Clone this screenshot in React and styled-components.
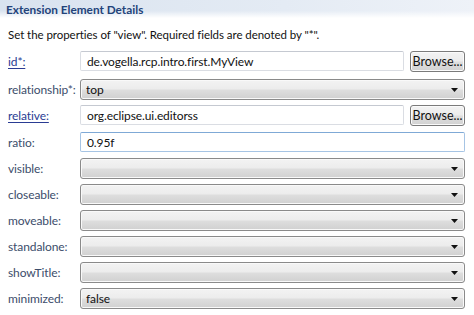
import React from "react";
import styled, { createGlobalStyle } from "styled-components";

const Global = createGlobalStyle`
  html, body { margin: 0; padding: 0; background: #fff; }
  body { font-family: Lato, "Open Sans", sans-serif; }
`;

const Page = styled.div`
  width: 474px;
  height: 315px;
  background: #fff;
  overflow: hidden;
`;

const Header = styled.div`
  height: 18px;
  display: flex;
  align-items: center;
  padding-left: 6px;
  background: linear-gradient(to bottom, rgba(255,255,255,0) 0%, rgba(255,255,255,0.0) 60%, #ffffff 100%),
    linear-gradient(to right, #d9e3ef 0%, #e4ebf4 60%, #eef2f8 100%);
  font-weight: 700;
  font-size: 11.8px;
  color: #23437a;
`;

const Description = styled.div`
  margin: 8px 0 0 8px;
  height: 17px;
  display: flex;
  align-items: center;
  font-size: 11.5px;
  letter-spacing: -0.05px;
  color: #111;
`;

const Form = styled.div`
  margin-top: 8px;
  display: grid;
  grid-template-columns: 72px 1fr;
  row-gap: 5px;
  padding: 0 9px 0 8px;
`;

const Label = styled.div`
  height: 21px;
  display: flex;
  align-items: center;
  font-size: 12px;
  letter-spacing: -0.1px;
  color: #3c4d6b;
  white-space: nowrap;
  ${(p) => p.$link && `
    color: #2a3c93;
    text-decoration: underline;
    text-underline-offset: 2px;
  `}
  ${(p) => p.$extra && `margin-top: ${p.$extra}px;`}
`;

const Cell = styled.div`
  display: flex;
  gap: 6px;
  height: 21px;
  ${(p) => p.$extra && `margin-top: ${p.$extra}px;`}
`;

const TextField = styled.div`
  flex: 1;
  box-sizing: border-box;
  height: 20px;
  border: 1px solid ${(p) => (p.$focus ? "#a6c4e4" : "#dadde3")};
  border-top-color: ${(p) => (p.$focus ? "#7fa9d6" : "#c5c9d1")};
  border-radius: 2px;
  background: #fff;
  display: flex;
  align-items: center;
  padding-left: 6px;
  font-size: 12px;
  letter-spacing: -0.1px;
  color: #111;
`;

const Button = styled.div`
  width: 55px;
  box-sizing: border-box;
  height: 21px;
  border: 1px solid #7b7b7b;
  border-radius: 3px;
  background: linear-gradient(to bottom, #f3f3f3 0%, #ececec 48%, #dedede 52%, #d2d2d2 100%);
  box-shadow: inset 0 0 0 1px #fbfbfb;
  display: flex;
  align-items: center;
  justify-content: center;
  font-size: 12.5px;
  color: #111;
`;

const Combo = styled.div`
  flex: 1;
  box-sizing: border-box;
  height: 21px;
  border: 1px solid #8a8a8a;
  border-radius: 3px;
  background: linear-gradient(to bottom, #f3f3f3 0%, #ececec 48%, #dedede 52%, #d0d0d0 100%);
  box-shadow: inset 0 0 0 1px #f9f9f9;
  display: flex;
  align-items: center;
  padding: 0 6px 0 5px;
  font-size: 12px;
  letter-spacing: -0.1px;
  color: #111;
`;

const ComboText = styled.span`
  flex: 1;
`;

const Arrow = () => (
  <svg width="7" height="4" viewBox="0 0 7 4">
    <path d="M0 0 H7 L3.5 4 Z" fill="#111" />
  </svg>
);

const rows = [
  { label: "id*:", link: true, kind: "text", value: "de.vogella.rcp.intro.first.MyView", browse: true },
  { label: "relationship*:", kind: "combo", value: "top", extra: 2 },
  { label: "relative:", link: true, kind: "text", value: "org.eclipse.ui.editorss", browse: true },
  { label: "ratio:", kind: "text", value: "0.95f", focus: true, extra: 1 },
  { label: "visible:", kind: "combo", value: "" },
  { label: "closeable:", kind: "combo", value: "" },
  { label: "moveable:", kind: "combo", value: "" },
  { label: "standalone:", kind: "combo", value: "" },
  { label: "showTitle:", kind: "combo", value: "" },
  { label: "minimized:", kind: "combo", value: "false" },
];

export default function App() {
  return (
    <Page>
      <Global />
      <Header>Extension Element Details</Header>
      <Description>Set the properties of "view". Required fields are denoted by "*".</Description>
      <Form>
        {rows.map((r) => (
          <React.Fragment key={r.label}>
            <Label $link={r.link} $extra={r.extra}>{r.label}</Label>
            <Cell $extra={r.extra}>
              {r.kind === "text" ? (
                <TextField $focus={r.focus}>{r.value}</TextField>
              ) : (
                <Combo>
                  <ComboText>{r.value}</ComboText>
                  <Arrow />
                </Combo>
              )}
              {r.browse && <Button>Browse...</Button>}
            </Cell>
          </React.Fragment>
        ))}
      </Form>
    </Page>
  );
}
